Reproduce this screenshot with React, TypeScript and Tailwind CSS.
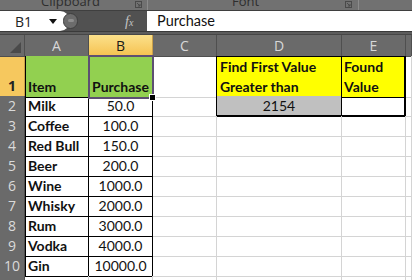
import React from "react"

const COLS = "grid grid-cols-[25px_64px_64px_64px_125px_64px_1fr]"
const CELL = "font-['Lato',sans-serif] text-[14px] text-[#111]"

const ITEMS = [
  ["Milk", "50.0"],
  ["Coffee", "100.0"],
  ["Red Bull", "150.0"],
  ["Beer", "200.0"],
  ["Wine", "1000.0"],
  ["Whisky", "2000.0"],
  ["Rum", "3000.0"],
  ["Vodka", "4000.0"],
  ["Gin", "10000.0"],
]

function Launcher() {
  return (
    <svg width="7" height="7" viewBox="0 0 7 7" className="mb-[2px]">
      <rect x="0.5" y="0.5" width="6" height="6" fill="none" stroke="#4a4a4a" />
      <path d="M2 2 L5 5 M5 3 V5 H3" stroke="#4a4a4a" fill="none" />
    </svg>
  )
}

function RowHead({ n, active }: { n: number; active?: boolean }) {
  return (
    <div
      className={
        "flex items-end justify-center pb-[1px] border-r border-b text-[14px] font-['Open_Sans',sans-serif] " +
        (active
          ? "bg-[#f6c85e] text-[#222] border-r-[#c9a04a] border-b-[#c9a04a]"
          : "bg-[#6a6a6a] text-[#dadada] border-r-[#4f4f4f] border-b-[#828282]")
      }
    >
      {n}
    </div>
  )
}

export default function App() {
  return (
    <div className="w-[412px] h-[280px] overflow-hidden bg-white select-none">
      {/* ribbon group labels (cut off) */}
      <div className="h-[11px] overflow-hidden bg-[#717171] flex items-end border-b border-[#3f3f3f] font-['Open_Sans',sans-serif] text-[13px] text-[#2e2e2e]">
        <div className="w-[148px] h-full flex items-end justify-between pl-[41px] pr-[5px] border-r border-[#8c8c8c]">
          <span className="leading-[17px]">Clipboard</span>
          <Launcher />
        </div>
        <div className="w-[211px] h-full flex items-end justify-between pl-[84px] pr-[6px] border-r border-[#8c8c8c]">
          <span className="leading-[17px]">Font</span>
          <Launcher />
        </div>
      </div>

      {/* formula bar */}
      <div className="h-[21px] flex bg-[#515151] border-b border-[#3a3a3a]">
        <div className="w-[70px] bg-white flex items-center rounded-r-[10px] pl-[15px] font-['Open_Sans',sans-serif] text-[14px] text-[#222]">
          <span className="w-[34px]">B1</span>
          <svg width="8" height="5" viewBox="0 0 8 5">
            <path d="M0 0 H8 L4 5 Z" fill="#111" />
          </svg>
        </div>
        <div className="relative -ml-[7px] mt-[2px] w-[15px] h-[16px] rounded-full bg-[#6c6c6c] border border-[#3e3e3e]">
          <div className="absolute left-[4px] top-[5px] w-[6px] h-[3px] rounded-full bg-[#8e8e8e]" />
        </div>
        <div className="flex-1" />
        <div className="w-[22px] flex items-center font-['Liberation_Serif',serif] italic text-[14px] text-[#c4c4c4]">
          f<span className="text-[10px] mt-[3px]">x</span>
        </div>
        <div className="w-[265px] bg-white flex items-center pl-[10px] font-['Lato',sans-serif] text-[14.5px] text-[#111]">
          Purchase
        </div>
      </div>
      <div className="h-[3px] bg-[#5c5c5c] border-b border-[#464646]" />

      {/* column headers */}
      <div className={COLS + " h-[21px] font-['Open_Sans',sans-serif] text-[14px]"}>
        <div className="bg-[#6a6a6a] border-r border-b border-[#4f4f4f] relative">
          <svg width="11" height="11" viewBox="0 0 11 11" className="absolute right-[3px] bottom-[3px]">
            <path d="M11 0 V11 H0 Z" fill="#4a4a4a" />
          </svg>
        </div>
        {["A", "B", "C", "D", "E", ""].map((c) => (
          <div
            key={c || "F"}
            className={
              "flex items-center justify-center border-r border-b " +
              (c === "B"
                ? "bg-gradient-to-b from-[#fbe08a] to-[#f5c24e] text-[#1a1a1a] border-r-[#c9a04a] border-b-[#c9a04a]"
                : "bg-[#6a6a6a] text-[#d8d8d8] border-r-[#4f4f4f] border-b-[#4f4f4f]")
            }
          >
            {c}
          </div>
        ))}
      </div>

      {/* row 1 */}
      <div className={COLS + " h-[40px] " + CELL + " font-bold leading-[20px]"}>
        <RowHead n={1} active />
        <div className="bg-[#92d050] border-l border-r border-b border-black flex items-end pl-[2px]">Item</div>
        <div className="relative bg-[#92d050] border-r border-b border-black flex items-end justify-center outline-2 outline-[#5d4f72] -outline-offset-1">
          Purchase
          <div className="absolute -right-[4px] -bottom-[4px] w-[7px] h-[7px] bg-black border border-white z-10" />
        </div>
        <div className="border-r border-b border-r-black border-b-[#d4d4d4]" />
        <div className="bg-[#ffff00] border-t border-r border-b border-black pl-[3px]">
          Find First Value
          <br />
          Greater than
        </div>
        <div className="bg-[#ffff00] border-t border-b border-r-2 border-black pl-[2px]">
          Found
          <br />
          Value
        </div>
        <div className="border-r border-b border-[#d4d4d4]" />
      </div>

      {/* rows 2-10 */}
      {ITEMS.map(([item, val], i) => (
        <div key={item} className={COLS + " h-[20px] " + CELL + " leading-[19px]"}>
          <RowHead n={i + 2} />
          <div className="border-l border-r border-b border-black pl-[2px] font-bold">{item}</div>
          <div className="border-r border-b border-black text-center">{val}</div>
          <div
            className={
              "border-r border-b border-b-[#d4d4d4] " +
              (i === 0 ? "border-r-black" : "border-r-[#d4d4d4]")
            }
          />
          {i === 0 ? (
            <>
              <div className="bg-[#c0c0c0] border-r border-b-2 border-black text-center">2154</div>
              <div className="border-r-2 border-b-2 border-black" />
            </>
          ) : (
            <>
              <div className="border-r border-b border-[#d4d4d4]" />
              <div className="border-r border-b border-[#d4d4d4]" />
            </>
          )}
          <div className="border-r border-b border-[#d4d4d4]" />
        </div>
      ))}

      {/* row 11 (partial) */}
      <div className={COLS + " h-[20px] " + CELL}>
        <RowHead n={11} />
        <div className="border-r border-b border-[#d4d4d4]" />
        <div className="border-r border-b border-[#d4d4d4]" />
        <div className="border-r border-b border-[#d4d4d4]" />
        <div className="border-r border-b border-[#d4d4d4]" />
        <div className="border-r border-b border-[#d4d4d4]" />
        <div className="border-r border-b border-[#d4d4d4]" />
      </div>
    </div>
  )
}
